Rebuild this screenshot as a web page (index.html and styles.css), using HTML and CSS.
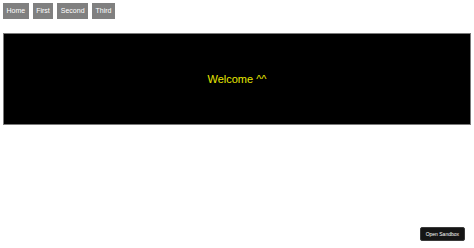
FILE: index.html
```html
<!DOCTYPE html>
<html>
<head>
<meta charset="utf-8">
<link rel="stylesheet" href="styles.css">
</head>
<body>
<nav class="nav">
  <button class="nav-btn">Home</button>
  <button class="nav-btn">First</button>
  <button class="nav-btn">Second</button>
  <button class="nav-btn">Third</button>
</nav>
<main class="hero">
  <p class="hero-text">Welcome ^^</p>
</main>
<button class="sandbox-btn">Open Sandbox</button>
</body>
</html>
```
FILE: styles.css
```css
html, body {
  margin: 0;
  padding: 0;
  background: #ffffff;
}
body {
  padding: 3px;
  font-family: "Liberation Sans", Arial, sans-serif;
}
.nav {
  display: flex;
  gap: 4px;
  height: 16px;
}
.nav-btn {
  height: 16px;
  padding: 0 3.5px;
  margin: 0;
  border: none;
  background: #808080;
  color: #ffffff;
  font-family: "Liberation Sans", Arial, sans-serif;
  font-size: 7px;
  line-height: 16px;
}
.hero {
  margin-top: 14px;
  height: 90px;
  background: #000000;
  border: 1px solid #7a7a7a;
  display: flex;
  align-items: center;
  justify-content: center;
}
.hero-text {
  margin: 0;
  color: #e8e800;
  font-size: 11px;
}
.sandbox-btn {
  position: fixed;
  right: 9px;
  bottom: 7px;
  height: 14px;
  padding: 0 5px;
  margin: 0;
  background: #151515;
  color: #ffffff;
  border: 1px solid #3a3a3a;
  border-radius: 2px;
  font-family: "Liberation Sans", Arial, sans-serif;
  font-size: 5px;
  line-height: 12px;
}
```
